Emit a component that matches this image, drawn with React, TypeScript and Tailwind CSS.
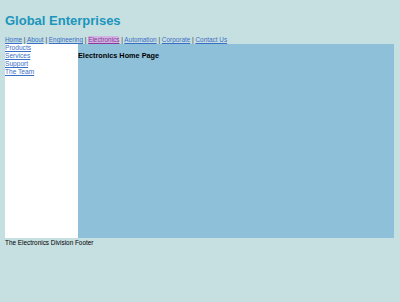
const navLinks = ["Home", "About", "Engineering", "Electronics", "Automation", "Corporate", "Contact Us"];
const sideLinks = ["Products", "Services", "Support", "The Team"];

export default function App() {
  return (
    <div className="min-h-[302px] w-[400px] bg-[#c6dfe0] px-[5px] pt-[13px] font-['Liberation_Sans',Arial,sans-serif] text-black">
      {/* Header */}
      <h1 className="text-[13px] font-bold leading-[16px] text-[#1a95bd]">Global Enterprises</h1>
      <div className="mt-[7px] text-[6.4px] leading-[8px] text-[#333]">
        {navLinks.map((l, i) => (
          <span key={l}>
            {i > 0 && " | "}
            <a href="#" className={`underline ${l === "Electronics" ? "bg-[#d2b4e2] text-[#8a3a9a]" : "text-[#3a6ec6]"}`}>{l}</a>
          </span>
        ))}
      </div>

      {/* Body */}
      <div className="flex h-[194px] w-[389px]">
        <div className="flex w-[73px] flex-col bg-white text-[6.6px] leading-[8px]">
          {sideLinks.map((l) => (
            <a key={l} href="#" className="text-[#3a6ec6] underline">{l}</a>
          ))}
        </div>
        <div className="flex-1 bg-[#8fc0d9] pt-[8px]">
          <h2 className="text-[7.3px] font-bold leading-[8px] text-black">Electronics Home Page</h2>
        </div>
      </div>

      <div className="pt-[1px] text-[6.4px] leading-[8px] text-black">The Electronics Division Footer</div>
    </div>
  );
}
